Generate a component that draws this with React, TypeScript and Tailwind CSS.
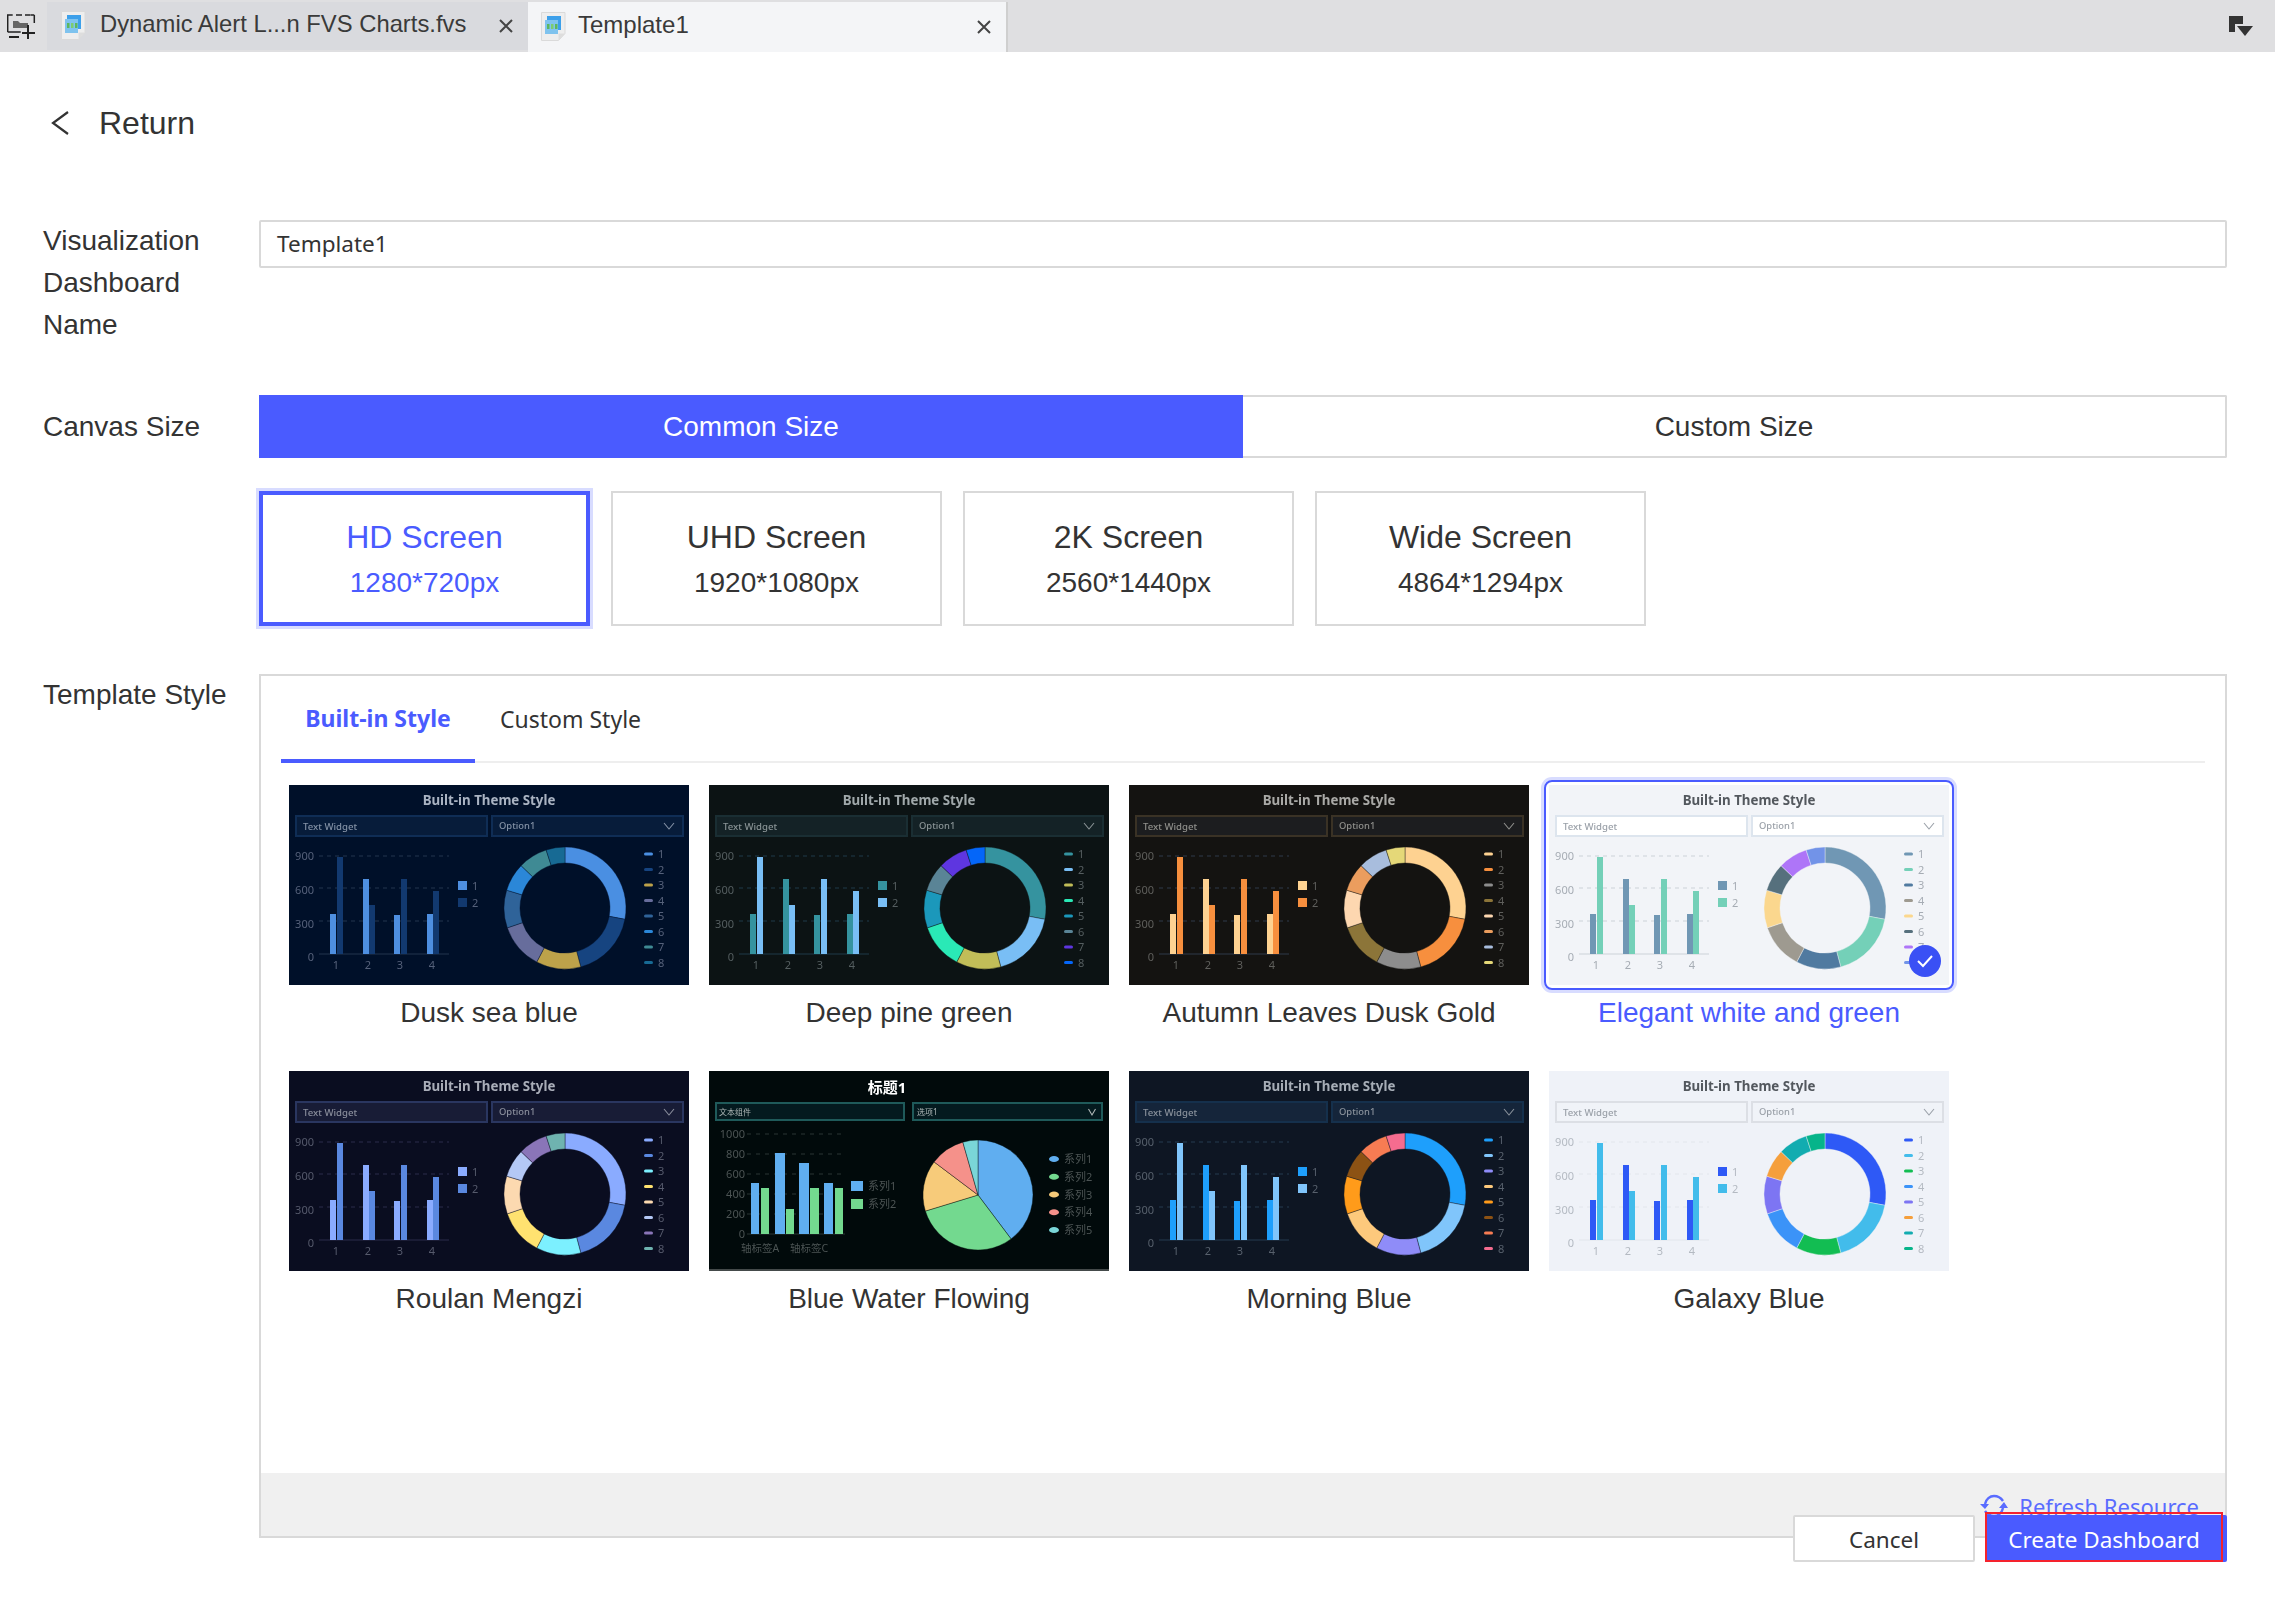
import React from "react";

type Theme = {
  name: string;
  bg: string;
  inputBg: string;
  inputBorder: string;
  title: string;
  text: string;
  axis: string;
  grid: string;
  bars: [string, string];
  segs: string[];
};

const ANGLES = [0, 100.7, 165, 207.6, 251, 287, 314, 342, 360];

const themes: Theme[] = [
  { name: "Dusk sea blue", bg: "#001029", inputBg: "#071c3a", inputBorder: "#0f2d55", title: "#a9b3c2", text: "#8492a6", axis: "#55617a", grid: "#23344f", bars: ["#4e8fe0", "#12396f"], segs: ["#4a8fe2", "#164480", "#bda24a", "#676d9c", "#2f6399", "#2b87d8", "#3f8a94", "#176a94"] },
  { name: "Deep pine green", bg: "#0c1314", inputBg: "#142226", inputBorder: "#1a2e33", title: "#a0a8aa", text: "#8a9496", axis: "#555e60", grid: "#1e3a48", bars: ["#35939f", "#79bef5"], segs: ["#35939f", "#79bef5", "#c1bd58", "#2ae9b6", "#1b98bb", "#5a8496", "#5e36e0", "#0466f9"] },
  { name: "Autumn Leaves Dusk Gold", bg: "#141311", inputBg: "#1c1d1f", inputBorder: "#3a3225", title: "#a9a9a6", text: "#90908c", axis: "#5f5f5c", grid: "#2e3a4a", bars: ["#fed291", "#f78f3e"], segs: ["#fed291", "#f78f3e", "#8d8d8d", "#8c7539", "#fdd7b0", "#eb9d5e", "#a8bddd", "#e5d878"] },
  { name: "Elegant white and green", bg: "#f2f4f8", inputBg: "#ffffff", inputBorder: "#dde5ee", title: "#53585e", text: "#9aa0a8", axis: "#a6acb4", grid: "#ccd2d8", bars: ["#7097b4", "#74d0b8"], segs: ["#7097b4", "#74d0b8", "#507aa0", "#9e9a90", "#fbd78e", "#56707d", "#ae75f8", "#7293e8"] },
  { name: "Roulan Mengzi", bg: "#0a0d20", inputBg: "#181c36", inputBorder: "#2a3660", title: "#a9adb8", text: "#8a8e9c", axis: "#565a6c", grid: "#2a2d4a", bars: ["#8aabff", "#5a88e0"], segs: ["#8aabff", "#5a88e0", "#7cf0ff", "#ffe270", "#fcd9b0", "#b4c8f5", "#8a75b8", "#6fb3b0"] },
  { name: "Blue Water Flowing", bg: "#010a0b", inputBg: "#041a1f", inputBorder: "#1f5a5a", title: "#ffffff", text: "#b0b8b8", axis: "#4c5454", grid: "#2a3434", bars: ["#60aef0", "#73d98f"], segs: [] },
  { name: "Morning Blue", bg: "#0e1623", inputBg: "#15253a", inputBorder: "#15304c", title: "#a6adb6", text: "#8a929c", axis: "#57606c", grid: "#253a50", bars: ["#1e9ffc", "#80c5fb"], segs: ["#1e9ffc", "#80c5fb", "#8f8cf8", "#fdc97c", "#ff9b1a", "#8c5214", "#f77c53", "#f56c8f"] },
  { name: "Galaxy Blue", bg: "#eff2f8", inputBg: "#f0f3f8", inputBorder: "#dcdfe5", title: "#53585e", text: "#9aa0a8", axis: "#b4bac2", grid: "#e2e6ec", bars: ["#2e59f6", "#42bceb"], segs: ["#2e59f6", "#42bceb", "#12bd52", "#3b93f8", "#7d75f3", "#f59f3c", "#12acb0", "#06b48a"] },
];

const pt = (cx: number, cy: number, r: number, deg: number) => {
  const a = ((deg - 90) * Math.PI) / 180;
  return [cx + r * Math.cos(a), cy + r * Math.sin(a)];
};

const ringPath = (cx: number, cy: number, ro: number, ri: number, a0: number, a1: number) => {
  const [x0, y0] = pt(cx, cy, ro, a0);
  const [x1, y1] = pt(cx, cy, ro, a1);
  const [x2, y2] = pt(cx, cy, ri, a1);
  const [x3, y3] = pt(cx, cy, ri, a0);
  const large = a1 - a0 > 180 ? 1 : 0;
  return `M${x0} ${y0}A${ro} ${ro} 0 ${large} 1 ${x1} ${y1}L${x2} ${y2}A${ri} ${ri} 0 ${large} 0 ${x3} ${y3}Z`;
};

const piePath = (cx: number, cy: number, r: number, a0: number, a1: number) => {
  const [x0, y0] = pt(cx, cy, r, a0);
  const [x1, y1] = pt(cx, cy, r, a1);
  return `M${cx} ${cy}L${x0} ${y0}A${r} ${r} 0 ${a1 - a0 > 180 ? 1 : 0} 1 ${x1} ${y1}Z`;
};

const FONT = "'Noto Sans','Noto Sans CJK SC',sans-serif";

function Chevron({ x, y, color, w = 5 }: { x: number; y: number; color: string; w?: number }) {
  return <path d={`M${x - w} ${y - 3}L${x} ${y + 3}L${x + w} ${y - 3}`} fill="none" stroke={color} strokeWidth="1.1" />;
}

function StandardThumb({ t }: { t: Theme }) {
  const groups: [number, number, number, number][] = [
    [41, 129, 48, 72],
    [74, 94, 80, 120],
    [105, 130, 112, 94],
    [138, 129, 144, 106],
  ];
  return (
    <svg viewBox="0 0 400 200" className="block h-[200px] w-[400px] blur-[0.6px]" fontFamily={FONT}>
      <rect width="400" height="200" fill={t.bg} />
      <text x="200" y="20" textAnchor="middle" fontSize="13.3" fontWeight="700" fill={t.title}>Built-in Theme Style</text>
      <rect x="7" y="31" width="191" height="20" fill={t.inputBg} stroke={t.inputBorder} strokeWidth="2" />
      <rect x="203" y="31" width="191" height="20" fill={t.inputBg} stroke={t.inputBorder} strokeWidth="2" />
      <text x="14" y="45" fontSize="9.6" fontWeight="500" fill={t.text}>Text Widget</text>
      <text x="210" y="44" fontSize="9.4" fontWeight="500" fill={t.text}>Option1</text>
      <Chevron x={380} y={41} color={t.text} />
      {[["900", 71, 71], ["600", 105, 103], ["300", 139, 136]].map(([l, ty, gy]) => (
        <g key={l as string}>
          <text x="25" y={(ty as number) + 4} textAnchor="end" fontSize="11" fill={t.axis}>{l}</text>
          <line x1="30" x2="160" y1={gy as number} y2={gy as number} stroke={t.grid} strokeDasharray="4 4" />
        </g>
      ))}
      <text x="25" y="176" textAnchor="end" fontSize="11" fill={t.axis}>0</text>
      <line x1="30" x2="160" y1="169" y2="169" stroke={t.grid} />
      {groups.map(([x1, y1, x2, y2], i) => (
        <g key={i}>
          <rect x={x1} y={y1} width="6" height={169 - y1} fill={t.bars[0]} />
          <rect x={x2} y={y2} width="6" height={169 - y2} fill={t.bars[1]} />
          <text x={47 + i * 32} y="183.5" textAnchor="middle" fontSize="11" fill={t.axis}>{i + 1}</text>
        </g>
      ))}
      <rect x="169" y="96" width="9" height="9" fill={t.bars[0]} />
      <rect x="169" y="113" width="9" height="9" fill={t.bars[1]} />
      <text x="183" y="105" fontSize="11" fill={t.axis}>1</text>
      <text x="183" y="122" fontSize="11" fill={t.axis}>2</text>
      {t.segs.map((c, i) => (
        <path key={i} d={ringPath(276, 123, 61, 45, ANGLES[i], ANGLES[i + 1])} fill={c} stroke={t.bg} strokeWidth="0.4" />
      ))}
      {t.segs.map((c, i) => {
        const y = 69 + i * 15.5;
        return (
          <g key={i}>
            <rect x="355" y={y - 1.5} width="9" height="3" rx="1.5" fill={c} />
            <text x="369" y={y + 4} fontSize="11" fill={t.axis}>{i + 1}</text>
          </g>
        );
      })}
    </svg>
  );
}

function WaterThumb({ t }: { t: Theme }) {
  const bars: [number, number, number, string][] = [
    [42, 112, 8, "#60aef0"],
    [52, 117, 8, "#73d98f"],
    [66, 82, 10, "#60aef0"],
    [77, 138, 8, "#73d98f"],
    [90, 92, 10, "#60aef0"],
    [101, 117, 9, "#73d98f"],
    [115, 112, 9, "#60aef0"],
    [126, 117, 8, "#73d98f"],
  ];
  const pie: [number, number, string][] = [
    [0, 143, "#60aef0"],
    [143, 253, "#73d98f"],
    [253, 307, "#f7cb7a"],
    [307, 344, "#f5918a"],
    [344, 360, "#7ad6d8"],
  ];
  return (
    <svg viewBox="0 0 400 200" className="block h-[200px] w-[400px] blur-[0.6px]" fontFamily={FONT}>
      <rect width="400" height="200" fill={t.bg} />
      <rect y="198" width="400" height="2" fill="#444a4a" />
      <text x="178" y="22" textAnchor="middle" fontSize="15" fontWeight="700" fill={t.title}>标题1</text>
      <rect x="7" y="32" width="188" height="17" fill={t.inputBg} stroke={t.inputBorder} strokeWidth="2" />
      <rect x="204" y="32" width="189" height="17" fill={t.inputBg} stroke={t.inputBorder} strokeWidth="2" />
      <text x="10" y="44" fontSize="8" fill={t.text}>文本组件</text>
      <text x="208" y="44" fontSize="8" fill={t.text}>选项1</text>
      <Chevron x={383} y={41} color={t.text} w={3.5} />
      {["1000", "800", "600", "400", "200", "0"].map((l, i) => {
        const y = 63 + i * 20;
        return (
          <g key={l}>
            <text x="36" y={y + 4} textAnchor="end" fontSize="11" fill={t.axis}>{l}</text>
            <line x1="38" x2="136" y1={y} y2={y} stroke={t.grid} strokeDasharray={i === 5 ? undefined : "4 5"} />
          </g>
        );
      })}
      {bars.map(([x, y, w, c], i) => (
        <rect key={i} x={x} y={y} width={w} height={163 - y} fill={c} />
      ))}
      <text x="51" y="181" textAnchor="middle" fontSize="10.5" fill={t.axis}>轴标签A</text>
      <text x="100" y="181" textAnchor="middle" fontSize="10.5" fill={t.axis}>轴标签C</text>
      <rect x="142" y="110" width="12" height="10" fill="#60aef0" />
      <rect x="142" y="128" width="12" height="10" fill="#73d98f" />
      <text x="159" y="119" fontSize="11" fill={t.axis}>系列1</text>
      <text x="159" y="137" fontSize="11" fill={t.axis}>系列2</text>
      {pie.map(([a0, a1, c], i) => (
        <path key={i} d={piePath(269, 124, 55, a0, a1)} fill={c} stroke={t.bg} strokeWidth="0.4" />
      ))}
      {pie.map(([, , c], i) => {
        const y = 88 + i * 17.75;
        return (
          <g key={i}>
            <ellipse cx="345" cy={y} rx="5" ry="3" fill={c} />
            <text x="355" y={y + 4} fontSize="11" fill={t.axis}>系列{i + 1}</text>
          </g>
        );
      })}
    </svg>
  );
}

function FileIcon() {
  return (
    <svg width="25" height="29" viewBox="0 0 25 29" className="-mt-[2px] shrink-0">
      <path d="M0.5 0.5h23.5v21l-6.5 7H0.5z" fill="#eeeeee" stroke="#dadada" />
      <path d="M24 21.5l-6.5 7v-7z" fill="#dddddd" />
      <rect x="6" y="4" width="14" height="14" fill="#3da0ea" />
      <rect x="4" y="8" width="13" height="14" fill="#7fc3ee" />
      <rect x="6" y="12" width="2.5" height="5" fill="#5cb85c" />
      <rect x="10" y="12" width="2.5" height="5" fill="#7ccd6f" />
      <rect x="14" y="12" width="2.5" height="5" fill="#5cb85c" />
    </svg>
  );
}

function CloseX() {
  return (
    <svg width="16" height="16" viewBox="0 0 16 16" className="shrink-0">
      <path d="M2 2L14 14M14 2L2 14" stroke="#444" strokeWidth="2" fill="none" />
    </svg>
  );
}

function TabBar() {
  return (
    <div className="flex h-[52px] w-full shrink-0 items-stretch bg-[#dfdfe1]">
      <div className="flex w-[47px] shrink-0 items-start pt-[14px] pl-[7px]">
        <svg width="29" height="26" viewBox="0 0 29 26">
          <path d="M0.7 18V1h5M9 1h6M18 1h5M27.3 1v8M27.3 1h-4M0.7 18h13" fill="none" stroke="#222" strokeWidth="1.5" />
          <path d="M6 14V7h5l2 2h8v5z" fill="#666" />
          <path d="M2 23h10M15 19h13M21 11v14" fill="none" stroke="#222" strokeWidth="2" />
        </svg>
      </div>
      <div className="mt-[2px] mb-[2px] flex w-[481px] shrink-0 items-center bg-[#d9dade] pr-[14px] pl-[14px]">
        <FileIcon />
        <span className="-mt-[4px] ml-[14px] flex-1 text-[23.8px] whitespace-nowrap text-[#3a3a3a]">Dynamic Alert L...n FVS Charts.fvs</span>
        <CloseX />
      </div>
      <div className="mt-[2px] flex w-[480px] shrink-0 items-center border-r-2 border-[#cfcfcf] bg-[#f4f5f7] pr-[14px] pl-[13px]">
        <FileIcon />
        <span className="-mt-[4px] ml-[12px] flex-1 text-[24px] text-[#3a3a3a]">Template1</span>
        <CloseX />
      </div>
      <div className="flex flex-1 items-start justify-end pt-[16px] pr-[22px]">
        <svg width="24" height="20" viewBox="0 0 24 20">
          <path d="M0 0h14v8H6v8H0z" fill="#333" />
          <path d="M8 10h16l-8 10z" fill="#333" />
        </svg>
      </div>
    </div>
  );
}

function SizeCard({ title, sub, active }: { title: string; sub: string; active?: boolean }) {
  return (
    <div
      className={
        active
          ? "flex h-[135px] w-[331px] flex-col items-center justify-center border-4 border-[#4a5bff] pt-[1px] text-[#4a5bff] shadow-[0_0_0_3px_#d8dcff]"
          : "flex h-[135px] w-[331px] flex-col items-center justify-center border-2 border-[#d9d9d9] pt-[1px] text-[#333]"
      }
    >
      <div className="h-[44px] text-[32px] leading-[44px]">{title}</div>
      <div className="mt-[3px] text-[28px] leading-[42px]">{sub}</div>
    </div>
  );
}

export default function App() {
  return (
    <div className="flex h-[1610px] w-[2275px] flex-col overflow-hidden bg-white font-['Liberation_Sans',sans-serif] text-[#333]">
      <TabBar />
      <main className="flex flex-col pr-[48px] pl-[43px]">
        <div className="flex h-[142px] items-center pl-[7px]">
          <svg width="20" height="26" viewBox="0 0 20 26">
            <path d="M18 2L3 13L18 24" fill="none" stroke="#333" strokeWidth="2.2" />
          </svg>
          <span className="ml-[29px] text-[32px] leading-none">Return</span>
        </div>

        <div className="mt-[26px] flex">
          <div className="w-[216px] shrink-0 text-[28px] leading-[42px]">
            Visualization
            <br />
            Dashboard
            <br />
            Name
          </div>
          <div className="flex h-[48px] flex-1 items-center rounded-[2px] border-2 border-[#d9d9d9] pl-[16px] font-['Noto_Sans',sans-serif] text-[22.5px]">
            Template1
          </div>
        </div>

        <div className="mt-[49px] flex">
          <div className="w-[216px] shrink-0 text-[28px] leading-[64px]">Canvas Size</div>
          <div className="flex flex-1 flex-col">
            <div className="flex h-[63px] text-[28px]">
              <div className="flex w-[984px] items-center justify-center bg-[#4a5bff] text-white">Common Size</div>
              <div className="flex flex-1 items-center justify-center rounded-r-[2px] border-2 border-l-0 border-[#d9d9d9]">Custom Size</div>
            </div>
            <div className="mt-[33px] flex gap-[21px]">
              <SizeCard title="HD Screen" sub="1280*720px" active />
              <SizeCard title="UHD Screen" sub="1920*1080px" />
              <SizeCard title="2K Screen" sub="2560*1440px" />
              <SizeCard title="Wide Screen" sub="4864*1294px" />
            </div>
          </div>
        </div>

        <div className="mt-[48px] flex">
          <div className="w-[216px] shrink-0 text-[28px] leading-[42px]">Template Style</div>
          <div className="relative flex h-[864px] flex-1 flex-col border-2 border-[#d9d9d9]">
            <div className="mx-[20px] flex h-[87px] shrink-0 border-b-2 border-[#eeeeee] pt-[2px] font-['Noto_Sans',sans-serif] text-[23px]">
              <div className="-mb-[2px] flex w-[194px] items-center justify-center border-b-4 border-[#4a5bff] font-bold text-[#4a5bff]">Built-in Style</div>
              <div className="flex items-center pl-[25px] text-[#333]">Custom Style</div>
            </div>
            <div className="mt-[22px] ml-[28px] grid grid-cols-[repeat(4,400px)] gap-x-[20px] gap-y-[30px]">
              {themes.map((t) => {
                const selected = t.name === "Elegant white and green";
                return (
                  <div key={t.name} className="flex flex-col">
                    <div className="relative h-[200px] w-[400px]">
                      <div className="h-[200px] w-[400px] overflow-hidden">
                        {t.segs.length ? <StandardThumb t={t} /> : <WaterThumb t={t} />}
                      </div>
                      {selected && (
                        <>
                          <div className="absolute -inset-[5px] rounded-[8px] border-2 border-[#4a5bff] shadow-[0_0_0_3px_#d8dcff]" />
                          <div className="absolute right-[8px] bottom-[8px] flex h-[32px] w-[32px] items-center justify-center rounded-full bg-[#3a50f5]">
                            <svg width="18" height="16" viewBox="0 0 18 16">
                              <path d="M2 8l5 5L16 3" fill="none" stroke="#fff" strokeWidth="2" />
                            </svg>
                          </div>
                        </>
                      )}
                    </div>
                    <div className={selected ? "flex h-[56px] items-center justify-center text-[28px] text-[#4a5bff]" : "flex h-[56px] items-center justify-center text-[28px] text-[#333]"}>
                      {t.name}
                    </div>
                  </div>
                );
              })}
            </div>
            <div className="relative mt-auto h-[63px] shrink-0 bg-[#f0f0f0]">
              <div className="absolute top-[18px] right-[26px] flex items-center gap-[11px] font-['Noto_Sans',sans-serif] text-[22px] leading-[30px] text-[#5a6cff]">
                <svg width="28" height="24" viewBox="0 0 28 24">
                  <path d="M5 10C6 5 10 2 14 2s7 2 9 5" fill="none" stroke="#5a6cff" strokeWidth="2.4" />
                  <path d="M23 14c-1 5-5 8-9 8s-7-2-9-5" fill="none" stroke="#5a6cff" strokeWidth="2.4" />
                  <path d="M0 10h9l-4 5zM19 14h9l-4-6z" fill="#5a6cff" />
                </svg>
                <span>Refresh Resource</span>
              </div>
            </div>
            <div className="absolute right-[-2px] bottom-[-26px] z-10 flex items-end gap-[10px] font-['Noto_Sans',sans-serif] text-[22.5px]">
              <div className="flex h-[47px] w-[182px] items-center justify-center rounded-[2px] border-2 border-[#d9d9d9] bg-white pt-[2px] text-[#333]">Cancel</div>
              <div className="relative flex h-[47px] w-[242px] items-center justify-center rounded-[2px] bg-[#4a5bff] pt-[2px] pr-[4px] text-white">
                Create Dashboard
                <div className="absolute -top-[3px] right-[4px] bottom-0 left-0 border-2 border-[#f5222d]" />
              </div>
            </div>
          </div>
        </div>
      </main>
    </div>
  );
}
